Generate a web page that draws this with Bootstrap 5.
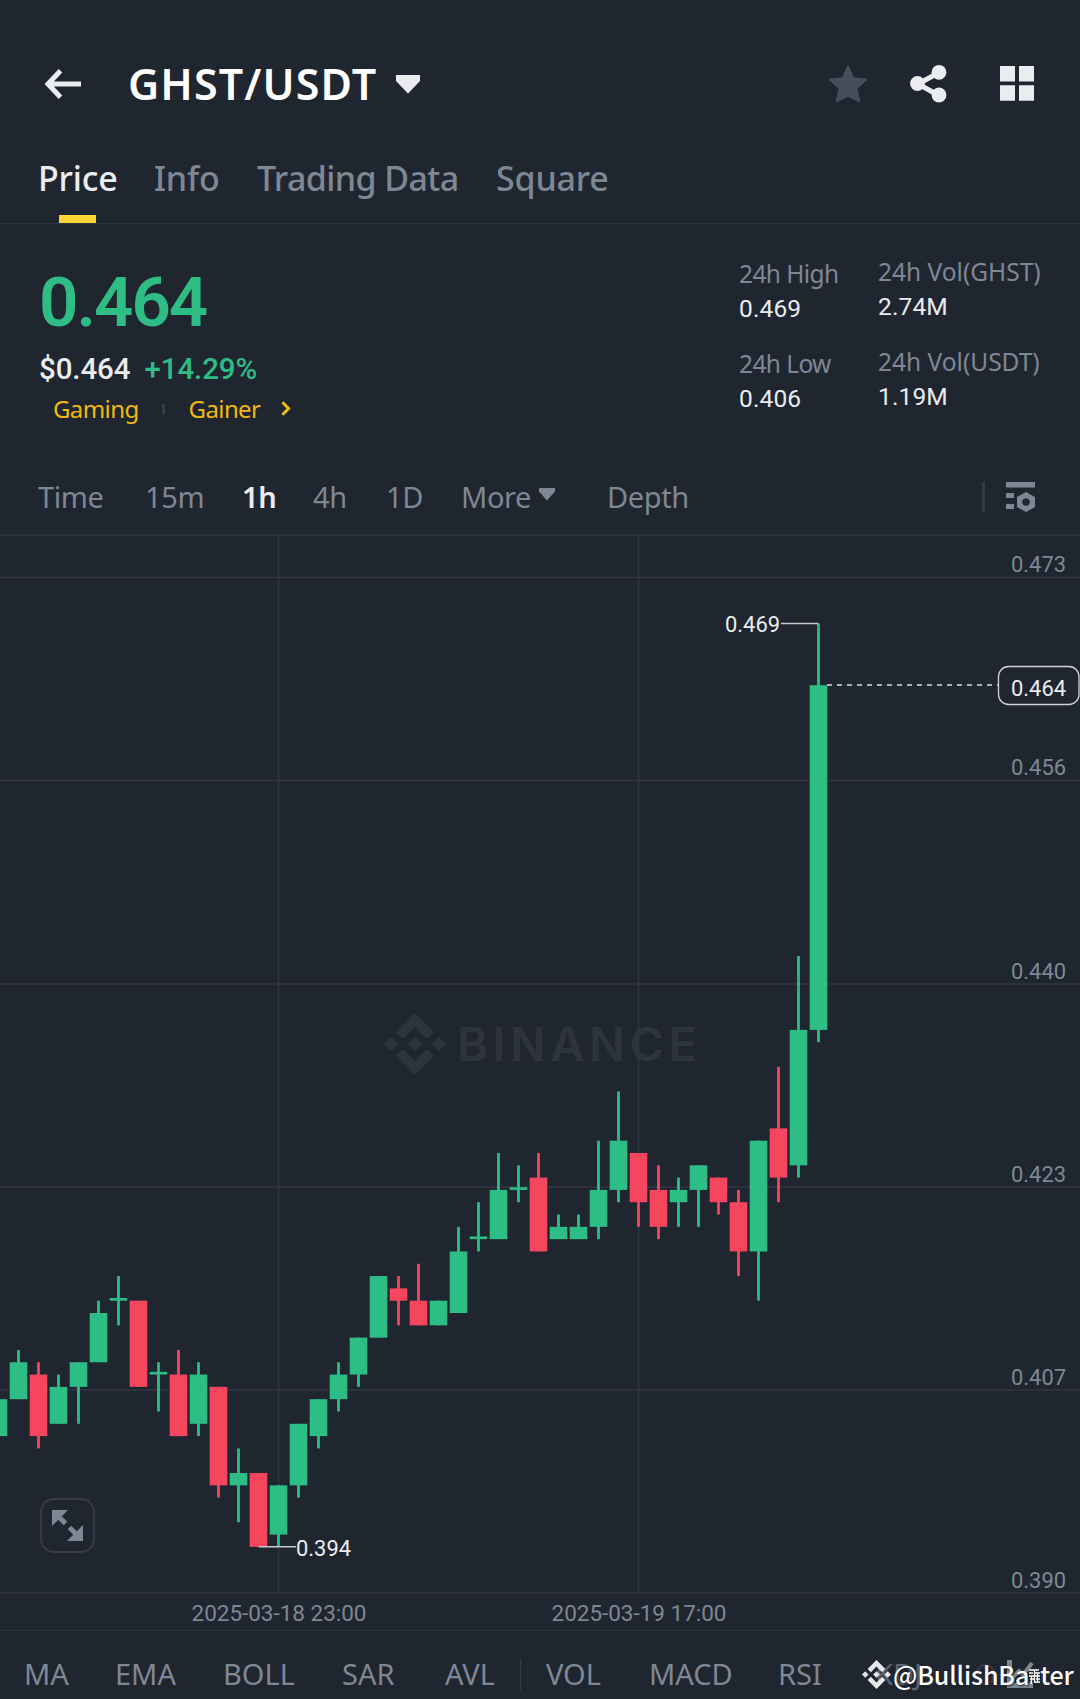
<!DOCTYPE html>
<html lang="en" data-bs-theme="dark">
<head>
<meta charset="utf-8">
<meta name="viewport" content="width=device-width, initial-scale=1">
<title>GHST/USDT</title>
<link href="https://cdn.jsdelivr.net/npm/bootstrap@5.3.0/dist/css/bootstrap.min.css" rel="stylesheet">
<style>
body{background:#202630;color:#eaecef;font-family:"Noto Sans",sans-serif;width:1080px;height:1699px;overflow:hidden}
svg{display:block;flex:none}
.num{font-family:Roboto,sans-serif}
.topbar{height:142px;padding:26px 46px 0 44px}
.pair{font-size:43px;font-weight:600;line-height:60px;color:#fff;margin-left:47px;letter-spacing:1.100px;width:268px;white-space:nowrap}
.ico-share{margin-left:42px}
.ico-grid{margin-left:53px}
.tabs-row{display:grid;grid-template-columns:116px 103px 239px 200px;height:82px;padding-left:38px;border-bottom:1px solid #2f3540}
.tabs-row .nav-link{font-size:34px;line-height:72px;font-weight:500;color:#7f8794;white-space:nowrap;letter-spacing:-.2px}
.tabs-row .nav-link.long{letter-spacing:-.6px}
.tabs-row .nav-link.active{color:#eaecef;position:relative}
.tabs-row .nav-link.active::after{content:"";position:absolute;left:21px;top:73px;width:37px;height:8px;background:#fcd535}
.quote{height:237px;padding:39px 0 0 39px}
.last{font-size:69px;line-height:80px;font-weight:600;color:#2ebd85;letter-spacing:-2px}
.fiat{font-size:29.5px;line-height:50px;font-weight:500;margin-top:1px;gap:14px;letter-spacing:-.1px}
.up{color:#2ebd85}
.tags{font-size:24px;line-height:29px;color:#f0b90b;padding-left:14px;letter-spacing:-.6px}
.tag-sep{width:3px;height:10px;background:#363c48;margin:0 24px 0 23px}
.chev{margin-left:21px}
.stats{display:grid;grid-template-columns:139px 202px;margin-top:-8px}
.stats div div{line-height:35px;white-space:nowrap}
.stats .lbl{font-size:24.5px;color:#7f8794}
.stats .narrow .lbl{letter-spacing:-.6px}
.stats .val{font-size:24.5px;margin-bottom:20px;letter-spacing:.15px}
.stats .narrow{padding-top:1px}
.stats .wide{margin-top:-1px}
.intervals{display:grid;grid-template-columns:107px 97px 71px 73px 75px 146px 375px 24px auto;align-items:center;height:75px;padding:0 0 2px 38px;border-bottom:2px solid #2a303a;font-size:29px;color:#7f8794;white-space:nowrap;letter-spacing:-.4px}
.intervals .on{color:#eaecef;font-weight:600}
.v-sep{width:3px;height:30px;background:#333945}
.chart text{font-family:Roboto,sans-serif;font-size:22.5px}
.chart .wordmark{font:600 47px Inter,sans-serif}
.indicators{display:grid;grid-template-columns:91px 108px 119px 103px 75px 26px 103px 129px 97px 99px auto;align-items:center;height:68px;border-top:1px solid #2f3540;font-size:29px;line-height:40px;color:#7f8794;padding:19px 0 0 24px;white-space:nowrap;position:relative}
.thin-sep{width:1px;height:31px;background:#363c48}
.fade1{color:#5b6370}
.fade2{color:#333944}
.add-chart{position:absolute;left:1007px;top:29px;z-index:-1}
.stamp{position:absolute;left:862px;top:21px;height:44px;font-family:"Noto Sans CJK JP",sans-serif;font-size:25px;line-height:44px;font-weight:500;color:#fff;letter-spacing:-.1px;text-shadow:1px 1px 2px #202630}
.stamp .logo{margin-right:2px}
</style>
<script src="https://cdn.jsdelivr.net/npm/bootstrap@5.3.0/dist/js/bootstrap.bundle.min.js"></script>
</head>
<body>
<svg width="0" height="0" class="position-absolute"><defs>
<symbol id="bnb" viewBox="0 0 126.6 126.6"><path d="M38.7 53.2 63.3 28.6 87.9 53.2 102.2 38.9 63.3 0 24.4 38.9zM0 63.3 14.3 49 28.6 63.3 14.3 77.6zM38.7 73.4 63.3 98 87.9 73.4 102.2 87.7 63.3 126.6 24.4 87.7zM98 63.3 112.3 49 126.6 63.3 112.3 77.6zM77.8 63.3 63.3 48.8 48.8 63.3 63.3 77.8z"/></symbol>
</defs></svg>

<header class="topbar d-flex align-items-center">
  <svg width="37" height="30" viewBox="0 0 37 30" fill="none" stroke="#eaecef" stroke-width="5"><path d="M37 15H4M16.500 1.800 4 15l12.500 13.200"/></svg>
  <span class="pair">GHST/USDT</span>
  <svg width="24" height="19" viewBox="0 0 24 19" fill="#eaecef"><path d="M0 0h24v6L12 18.500 0 6z"/></svg>
  <svg class="ms-auto" width="38" height="38" viewBox="0 0 38 38" fill="#474d5a" stroke="#474d5a" stroke-width="2" stroke-linejoin="round"><path d="m19 1.500 5.200 11.700 12.800 1.400-9.500 8.600 2.700 12.800L19 30.800 7.800 36l2.700-12.800L1 14.600l12.800-1.400z"/></svg>
  <svg class="ico-share" width="38" height="40" viewBox="0 0 38 40" fill="#eaecef"><path d="M30 8.500 9 20l21 11.500" fill="none" stroke="#eaecef" stroke-width="5"/><circle cx="30" cy="8.300" r="7.400"/><circle cx="8.500" cy="19.500" r="7.400"/><circle cx="30" cy="31" r="7.400"/></svg>
  <svg class="ico-grid" width="34" height="36" viewBox="0 0 34 36" fill="#eaecef"><path d="M0 0h15v15.500H0zM19 0h15v15.500H19zM0 19.300h15v15.500H0zM19 19.300h15v15.500H19z"/></svg>
</header>

<nav class="tabs-row">
  <a class="nav-link active p-0">Price</a><a class="nav-link p-0">Info</a><a class="nav-link long p-0">Trading Data</a><a class="nav-link p-0">Square</a>
</nav>

<section class="quote d-flex justify-content-between">
  <div>
    <div class="last num">0.464</div>
    <div class="fiat num d-flex"><span>$0.464</span><span class="up">+14.29%</span></div>
    <div class="tags d-flex align-items-center"><span>Gaming</span><i class="tag-sep"></i><span>Gainer</span>
      <svg class="chev" width="10" height="15" viewBox="0 0 10 15" fill="none" stroke="#f0b90b" stroke-width="3"><path d="m1.500 1.200 6 6.300-6 6.300"/></svg></div>
  </div>
  <div class="stats">
    <div class="narrow"><div class="lbl">24h High</div><div class="val num">0.469</div><div class="lbl">24h Low</div><div class="val num">0.406</div></div>
    <div class="wide"><div class="lbl">24h Vol(GHST)</div><div class="val num">2.74M</div><div class="lbl">24h Vol(USDT)</div><div class="val num">1.19M</div></div>
  </div>
</section>

<nav class="intervals">
  <span>Time</span><span>15m</span><span class="on">1h</span><span>4h</span><span>1D</span>
  <span class="d-flex align-items-center">More<svg width="16" height="13" viewBox="0 0 16 13" fill="#7f8794" class="ms-2 mb-1"><path d="M0 0h16v3.500L8 12.500 0 3.500z"/></svg></span>
  <span>Depth</span><i class="v-sep"></i>
  <svg width="30" height="32" viewBox="0 0 30 32" fill="#7f8794"><path d="M0 1h29v5.500H0zM0 12h8v5H0zM0 23h8v5H0z"/><path fill-rule="evenodd" d="M20 11l9 5v10l-9 5-9-5V16zm0 6.200a3.800 3.800 0 1 0 .01 0z"/></svg>
</nav>

<svg class="chart" width="1080" height="1094" viewBox="0 536 1080 1094">
  <g fill="#2e343e"><use href="#bnb" x="384" y="1013" width="62" height="62"/>
  <text class="wordmark" x="457" y="1061" textLength="240">BINANCE</text></g>
  <path d="M0 577.500H1080M0 780.500H1080M0 984H1080M0 1187H1080M0 1390H1080M0 1593H1080M278.500 536V1593M638.500 536V1593" stroke="#303641" stroke-width="1.500" fill="none"/>
  <g fill="#7f8794">
    <text x="1011" y="572.300" textLength="55" lengthAdjust="spacingAndGlyphs">0.473</text><text x="1011" y="775.300" textLength="55" lengthAdjust="spacingAndGlyphs">0.456</text><text x="1011" y="978.500" textLength="55" lengthAdjust="spacingAndGlyphs">0.440</text><text x="1011" y="1181.600" textLength="55" lengthAdjust="spacingAndGlyphs">0.423</text><text x="1011" y="1384.800" textLength="55" lengthAdjust="spacingAndGlyphs">0.407</text><text x="1011" y="1588" textLength="55" lengthAdjust="spacingAndGlyphs">0.390</text>
    <text x="191.500" y="1621" textLength="175">2025-03-18 23:00</text><text x="551.500" y="1621" textLength="175">2025-03-19 17:00</text>
  </g>
  <g id="candles"></g>
  <path d="M781 623.500h37.500M259 1546.800h37" stroke="#c4c8cf" stroke-width="1.600"/>
  <text x="725" y="632" fill="#eaecef" textLength="55" lengthAdjust="spacingAndGlyphs">0.469</text><text x="296" y="1556" fill="#eaecef" textLength="55" lengthAdjust="spacingAndGlyphs">0.394</text>
  <path d="M827 685H998" stroke="#a9afb8" stroke-width="1.800" stroke-dasharray="5 5"/>
  <rect x="998.500" y="666.500" width="80.500" height="38" rx="10" fill="#202630" stroke="#d0d3d9" stroke-width="1.300"/>
  <text x="1011" y="696.300" fill="#eaecef" textLength="55" lengthAdjust="spacingAndGlyphs">0.464</text>
  <rect x="41" y="1499" width="53" height="53" rx="13" fill="#202630" stroke="#363b47" stroke-width="1.800"/>
  <g fill="#7f8794"><path d="M52 1510h16l-16 16zM83 1541v-16l-16 16z"/><path d="m57 1515 8.500 8.500M69.500 1527.500l8.500 8.500" stroke="#7f8794" stroke-width="5"/></g>
</svg>

<nav class="indicators">
  <span>MA</span><span>EMA</span><span>BOLL</span><span>SAR</span><span>AVL</span><i class="thin-sep"></i><span>VOL</span><span>MACD</span><span>RSI</span><span class="fade1">KDJ</span><span class="fade2">O</span>
  <div class="stamp d-flex align-items-center">
    <svg class="logo" width="29" height="29" fill="#e6e8ea"><use href="#bnb" width="29" height="29"/></svg><span>@BullishBa</span><svg width="11" height="15" viewBox="0 0 11 15" fill="none" stroke="#fff" stroke-width="1.300" class="mt-1"><path d="M0 1h10M0 4h4M6 4h5M0 7h11M1 10h4M7 10h4M1 13h2M6 13h5M2.500 7v8M5.500 1v13M8.500 4v10"/></svg><span>ter</span>
  </div>
  <svg class="add-chart" width="27" height="28" viewBox="0 0 27 28" fill="none" stroke="#7f8794"><path d="M2.500 0v25.500H26" stroke-width="5"/><path d="m4 19 8-8 4 4 9-12" stroke-width="4"/></svg>
</nav>

<script>
// [open, close, high, low] in thousandths of USDT, oldest first
const rows = [[403,406,406,403],[406,409,410,406],[408,403,409,402],[404,407,408,404],[407,409,409,404],[409,413,414,409],[414,414,416,412],[414,407,414,407],[408,408,409,405],[408,403,410,403],[404,408,409,403],[407,399,407,398],[399,400,402,396],[400,394,400,394],[395,399,399,394],[399,404,404,398],[403,406,406,402],[406,408,409,405],[408,411,411,407],[411,416,416,411],[415,414,416,412],[414,412,417,412],[412,414,414,412],[413,418,420,413],[419,419,422,418],[419,423,426,419],[423,423,425,422],[424,418,426,418],[419,420,421,419],[419,420,421,419],[420,423,427,419],[423,427,431,422],[426,422,426,420],[423,420,425,419],[422,423,424,420],[423,425,425,420],[424,422,424,421],[422,418,423,416],[418,427,427,414],[428,424,433,422],[425,436,442,424],[436,464,469,435]];
const y = p => 685.2 + (464 - p) * 12.31;
document.getElementById('candles').innerHTML = rows.map(([o,c,h,l],i) => {
  const x = 20*i - 1.5, col = c >= o ? '#2ebd85' : '#f6465d';
  const b = y(Math.min(o,c)), t = o === c ? b - 2.7 : y(Math.max(o,c));
  return `<g fill="${col}"><rect x="${x-1.4}" y="${y(h)}" width="2.8" height="${y(l)-y(h)}"/><rect x="${x-8.8}" y="${t}" width="17.6" height="${b-t}"/></g>`;
}).join('');
</script>
</body>
</html>
